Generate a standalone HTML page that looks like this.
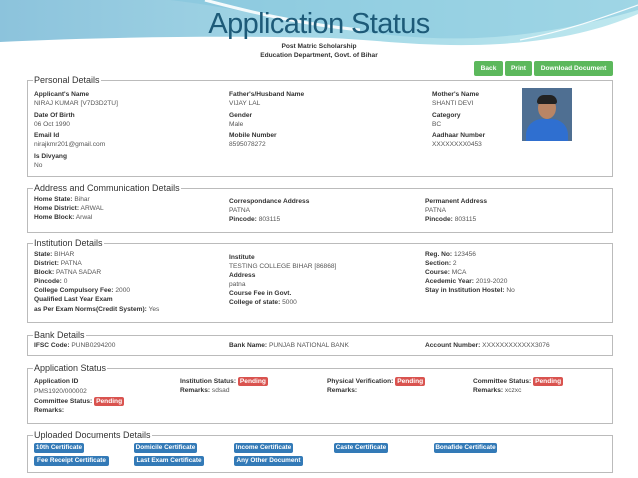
<!DOCTYPE html>
<html><head><meta charset="utf-8"><style>
*{margin:0;padding:0;box-sizing:border-box}
body{width:638px;height:478px;background:#fff;position:relative;overflow:hidden;font-family:"Liberation Sans",Arial,sans-serif;color:#333}
.a{position:absolute;white-space:nowrap;font-size:6.6px;line-height:8px}
b{font-weight:bold;color:#333}
.v{color:#555}
.box{position:absolute;border:1px solid #bbb;left:27px;width:586px}
.lg{position:absolute;background:#fff;font-size:9px;line-height:10px;color:#333;padding:0 1px;left:33px}
.btn{position:absolute;background:#5cb85c;color:#fff;font-size:6.6px;font-weight:bold;height:15px;line-height:15px;text-align:center;border-radius:2px}
.p{background:#d9534f;color:#fff;font-weight:bold;padding:0 2px;border-radius:2px;display:inline-block;line-height:9px}
.d{position:absolute;background:#337ab7;color:#fff;font-size:6.4px;font-weight:bold;height:10px;line-height:10px;text-align:center;border-radius:2px}
</style></head><body>
<svg style="position:absolute;left:0;top:0" width="638" height="50" viewBox="0 0 638 50">
<defs><linearGradient id="g" x1="0" x2="1" y1="0" y2="0"><stop offset="0" stop-color="#8cc3dc"/><stop offset="0.6" stop-color="#a8dbe8"/><stop offset="1" stop-color="#bfe8ef"/></linearGradient></defs>
<path d="M0 0H638V14C600 30 560 40 500 44C430 48 380 40 330 38C250 36 120 36 0 42Z" fill="url(#g)"/>
<path d="M170 0C240 8 320 28 400 36C470 42 540 38 638 10V0Z" fill="#7fc4dc" opacity="0.5"/>
<path d="M205 0C250 12 300 24 360 30" stroke="#fff" stroke-width="3" fill="none" opacity="0.9"/>
<path d="M60 42C150 38 230 37 300 40" stroke="#fff" stroke-width="1.5" fill="none" opacity="0.8"/>
<path d="M520 40C570 30 610 15 638 5" stroke="#fff" stroke-width="1.2" fill="none" opacity="0.9"/>
</svg>
<div class="a" style="left:0;width:638px;text-align:center;top:7px;font-size:29px;line-height:34px;letter-spacing:-0.6px;color:#1d5a78">Application Status</div>
<div class="a" style="left:0;width:638px;text-align:center;top:43px;font-weight:bold">Post Matric Scholarship</div>
<div class="a" style="left:0;width:638px;text-align:center;top:52px;font-weight:bold">Education Department, Govt. of Bihar</div>
<div class="btn" style="left:474px;top:61px;width:29px">Back</div>
<div class="btn" style="left:505px;top:61px;width:27px">Print</div>
<div class="btn" style="left:534px;top:61px;width:79px">Download Document</div>

<div class="box" style="top:80px;height:97px"></div><div class="lg" style="top:75px">Personal Details</div>
<div class="a" style="left:34px;top:91px"><b>Applicant's Name</b></div><div class="a v" style="left:34px;top:100px">NIRAJ KUMAR [V7D3D2TU]</div>
<div class="a" style="left:34px;top:112px"><b>Date Of Birth</b></div><div class="a v" style="left:34px;top:121px">06 Oct 1990</div>
<div class="a" style="left:34px;top:132px"><b>Email Id</b></div><div class="a v" style="left:34px;top:141px">nirajkmr201@gmail.com</div>
<div class="a" style="left:34px;top:153px"><b>Is Divyang</b></div><div class="a v" style="left:34px;top:162px">No</div>
<div class="a" style="left:229px;top:91px"><b>Father's/Husband Name</b></div><div class="a v" style="left:229px;top:100px">VIJAY LAL</div>
<div class="a" style="left:229px;top:112px"><b>Gender</b></div><div class="a v" style="left:229px;top:121px">Male</div>
<div class="a" style="left:229px;top:132px"><b>Mobile Number</b></div><div class="a v" style="left:229px;top:141px">8595078272</div>
<div class="a" style="left:432px;top:91px"><b>Mother's Name</b></div><div class="a v" style="left:432px;top:100px">SHANTI DEVI</div>
<div class="a" style="left:432px;top:112px"><b>Category</b></div><div class="a v" style="left:432px;top:121px">BC</div>
<div class="a" style="left:432px;top:132px"><b>Aadhaar Number</b></div><div class="a v" style="left:432px;top:141px">XXXXXXXX0453</div>
<div style="position:absolute;left:522px;top:88px;width:50px;height:53px;background:#4f6f92;overflow:hidden">
<div style="position:absolute;left:16px;top:9px;width:18px;height:22px;border-radius:50%;background:#b98565"></div>
<div style="position:absolute;left:15px;top:7px;width:20px;height:9px;border-radius:10px 10px 3px 3px;background:#222"></div>
<div style="position:absolute;left:4px;top:31px;width:42px;height:30px;border-radius:16px 16px 0 0;background:#2f6fd0"></div></div>

<div class="box" style="top:188px;height:45px"></div><div class="lg" style="top:183px">Address and Communication Details</div>
<div class="a" style="left:34px;top:196px"><b>Home State:</b> <span class="v">Bihar</span></div>
<div class="a" style="left:34px;top:205px"><b>Home District:</b> <span class="v">ARWAL</span></div>
<div class="a" style="left:34px;top:214px"><b>Home Block:</b> <span class="v">Arwal</span></div>
<div class="a" style="left:229px;top:198px"><b>Correspondance Address</b></div><div class="a v" style="left:229px;top:207px">PATNA</div><div class="a" style="left:229px;top:216px"><b>Pincode:</b> <span class="v">803115</span></div>
<div class="a" style="left:425px;top:198px"><b>Permanent Address</b></div><div class="a v" style="left:425px;top:207px">PATNA</div><div class="a" style="left:425px;top:216px"><b>Pincode:</b> <span class="v">803115</span></div>

<div class="box" style="top:243px;height:80px"></div><div class="lg" style="top:238px">Institution Details</div>
<div class="a" style="left:34px;top:251px"><b>State:</b> <span class="v">BIHAR</span></div>
<div class="a" style="left:34px;top:260px"><b>District:</b> <span class="v">PATNA</span></div>
<div class="a" style="left:34px;top:269px"><b>Block:</b> <span class="v">PATNA SADAR</span></div>
<div class="a" style="left:34px;top:278px"><b>Pincode:</b> <span class="v">0</span></div>
<div class="a" style="left:34px;top:287px"><b>College Compulsory Fee:</b> <span class="v">2000</span></div>
<div class="a" style="left:34px;top:296px"><b>Qualified Last Year Exam</b></div>
<div class="a" style="left:34px;top:306px"><b>as Per Exam Norms(Credit System):</b> <span class="v">Yes</span></div>
<div class="a" style="left:229px;top:254px"><b>Institute</b></div><div class="a v" style="left:229px;top:263px">TESTING COLLEGE BIHAR [86868]</div>
<div class="a" style="left:229px;top:272px"><b>Address</b></div><div class="a v" style="left:229px;top:281px">patna</div>
<div class="a" style="left:229px;top:290px"><b>Course Fee in Govt.</b></div><div class="a" style="left:229px;top:299px"><b>College of state:</b> <span class="v">5000</span></div>
<div class="a" style="left:425px;top:251px"><b>Reg. No:</b> <span class="v">123456</span></div>
<div class="a" style="left:425px;top:260px"><b>Section:</b> <span class="v">2</span></div>
<div class="a" style="left:425px;top:269px"><b>Course:</b> <span class="v">MCA</span></div>
<div class="a" style="left:425px;top:278px"><b>Acedemic Year:</b> <span class="v">2019-2020</span></div>
<div class="a" style="left:425px;top:287px"><b>Stay in Institution Hostel:</b> <span class="v">No</span></div>

<div class="box" style="top:335px;height:21px"></div><div class="lg" style="top:330px">Bank Details</div>
<div class="a" style="left:34px;top:342px"><b>IFSC Code:</b> <span class="v">PUNB0294200</span></div>
<div class="a" style="left:229px;top:342px"><b>Bank Name:</b> <span class="v">PUNJAB NATIONAL BANK</span></div>
<div class="a" style="left:425px;top:342px"><b>Account Number:</b> <span class="v">XXXXXXXXXXXX3076</span></div>

<div class="box" style="top:368px;height:56px"></div><div class="lg" style="top:363px">Application Status</div>
<div class="a" style="left:34px;top:378px"><b>Application ID</b></div><div class="a v" style="left:34px;top:388px">PMS1920/000002</div>
<div class="a" style="left:34px;top:397px"><b>Committee Status:</b> <span class="p">Pending</span></div>
<div class="a" style="left:34px;top:407px"><b>Remarks:</b></div>
<div class="a" style="left:180px;top:377px"><b>Institution Status:</b> <span class="p">Pending</span></div><div class="a" style="left:180px;top:387px"><b>Remarks:</b> <span class="v">sdsad</span></div>
<div class="a" style="left:327px;top:377px"><b>Physical Verification:</b> <span class="p">Pending</span></div><div class="a" style="left:327px;top:387px"><b>Remarks:</b></div>
<div class="a" style="left:473px;top:377px"><b>Committee Status:</b> <span class="p">Pending</span></div><div class="a" style="left:473px;top:387px"><b>Remarks:</b> <span class="v">xczxc</span></div>

<div class="box" style="top:435px;height:38px"></div><div class="lg" style="top:430px">Uploaded Documents Details</div>
<div class="d" style="left:34px;top:443px;width:50px">10th Certificate</div>
<div class="d" style="left:134px;top:443px;width:63px">Domicile Certificate</div>
<div class="d" style="left:234px;top:443px;width:59px">Income Certificate</div>
<div class="d" style="left:334px;top:443px;width:54px">Caste Certificate</div>
<div class="d" style="left:434px;top:443px;width:63px">Bonafide Certificate</div>
<div class="d" style="left:34px;top:456px;width:75px">Fee Receipt Certificate</div>
<div class="d" style="left:134px;top:456px;width:70px">Last Exam Certificate</div>
<div class="d" style="left:234px;top:456px;width:69px">Any Other Document</div>
</body></html>
